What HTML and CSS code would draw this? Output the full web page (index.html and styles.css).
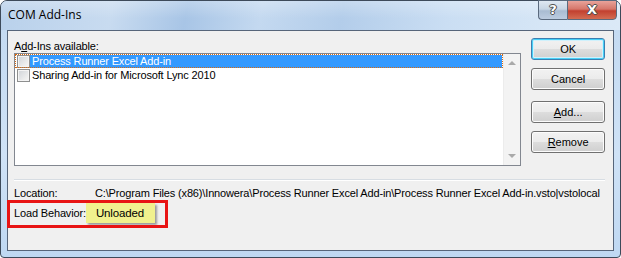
FILE: index.html
```html
<!DOCTYPE html>
<html lang="en">
<head>
  <meta charset="UTF-8">
  <title>COM Add-Ins</title>
  <link rel="stylesheet" href="styles.css">
</head>
<body>
  <div class="window">
    <!-- Title bar -->
    <div class="titlebar">
      <span class="title">COM Add-Ins</span>
      <div class="caption-btns">
        <div class="cap-btn help">?</div>
        <div class="cap-btn close">X</div>
      </div>
    </div>

    <div class="client">
      <div class="main-row">
        <div class="list-col">
          <div class="list-label">A<u>d</u>d-Ins available:</div>
          <div class="listbox">
            <div class="rows">
              <div class="row selected">
                <span class="check"></span>
                <span class="row-text">Process Runner Excel Add-in</span>
              </div>
              <div class="row">
                <span class="check"></span>
                <span class="row-text">Sharing Add-in for Microsoft Lync 2010</span>
              </div>
            </div>
            <div class="scrollbar">
              <span class="arrow up"></span>
              <span class="arrow down"></span>
            </div>
          </div>
        </div>

        <div class="btn-col">
          <button class="btn default">OK</button>
          <button class="btn">Cancel</button>
          <button class="btn gap"><u>A</u>dd...</button>
          <button class="btn"><u>R</u>emove</button>
        </div>
      </div>

      <div class="separator"></div>

      <div class="info-row">
        <span class="info-label">Location:</span>
        <span class="info-value">C:\Program Files (x86)\Innowera\Process Runner Excel Add-in\Process Runner Excel Add-in.vsto|vstolocal</span>
      </div>
      <div class="info-row behavior">
        <span class="info-label">Load Behavior:</span>
        <span class="callout">Unloaded</span>
      </div>
    </div>

    <!-- annotation box -->
    <div class="highlight"></div>
  </div>
</body>
</html>
```

FILE: styles.css
```css
* {
  margin: 0;
  padding: 0;
  box-sizing: border-box;
}

body {
  width: 621px;
  height: 258px;
  overflow: hidden;
  background: #fff;
  font-family: 'Liberation Sans', Arial, sans-serif;
  font-size: 11px;
  letter-spacing: -0.15px;
  color: #000;
}

.window {
  position: relative;
  width: 621px;
  height: 258px;
  border: 1px solid #3d4a5a;
  border-radius: 7px 7px 4px 4px;
  background: linear-gradient(180deg, #c2d9f1 0%, #cfe2f6 60%, #bfd8f2 100%);
  padding: 0 6px 6px 6px;
  display: flex;
  flex-direction: column;
}

/* Title bar */
.titlebar {
  height: 29px;
  display: flex;
  align-items: flex-start;
  margin: 0 -6px;
  padding: 0 3px 0 7px;
  border-radius: 6px 6px 0 0;
  background:
    linear-gradient(180deg, rgba(255,255,255,0.25) 0%, rgba(255,255,255,0) 60%),
    linear-gradient(100deg, #b9d1eb 0%, #c8dbf0 18%, #a8c5e6 30%, #c4d9f0 42%, #b3cdea 55%, #cadef3 72%, #d6e6f6 88%, #dbe9f7 100%);
}

.title {
  font-family: 'Open Sans', 'Liberation Sans', sans-serif;
  font-size: 12px;
  line-height: 12px;
  letter-spacing: 0;
  margin-top: 8px;
  color: #000;
}

.caption-btns {
  margin-left: auto;
  display: flex;
  margin-top: -1px;
}

.cap-btn {
  height: 20px;
  border: 1px solid #5a6a7e;
  color: #fff;
  font-family: 'DejaVu Sans', sans-serif;
  font-weight: bold;
  font-size: 13px;
  line-height: 18px;
  letter-spacing: 0;
  text-align: center;
  text-shadow: 0 0 1px #333, 1px 0 0 #555, -1px 0 0 #555, 0 1px 0 #555, 0 -1px 0 #555;
}

.cap-btn.help {
  width: 29px;
  border-right: none;
  border-radius: 0 0 0 4px;
  background: linear-gradient(180deg, #dfe8f2 0%, #c7d5e4 45%, #a9bcd2 55%, #bccce0 100%);
}

.cap-btn.close {
  width: 50px;
  border-radius: 0 0 4px 0;
  background: linear-gradient(180deg, #e8a39a 0%, #d5766a 45%, #c2402f 55%, #d36c52 100%);
}

/* Client area */
.client {
  flex: 1;
  background: #f0f0f0;
  border: 1px solid #56657a;
  padding: 7px 8px 0 6px;
}

.main-row {
  display: flex;
  gap: 10px;
}

.list-col {
  width: 509px;
}

.list-label {
  height: 15px;
  line-height: 13px;
  padding-top: 2px;
}

.listbox {
  height: 113px;
  background: #fff;
  border: 1px solid #828790;
  display: flex;
}

.rows {
  flex: 1;
}

.row {
  height: 14px;
  display: flex;
  align-items: center;
  padding-left: 2px;
}

.row.selected {
  outline: 1px dotted #d86a10;
  outline-offset: -1px;
}

.row.selected .row-text {
  background: #3399ff;
  color: #fff;
  align-self: stretch;
  flex: 1;
  line-height: 13px;
  margin: 1px 1px 0 0;
}

.row-text {
  padding-left: 2px;
  line-height: 14px;
  white-space: nowrap;
}

.check {
  width: 13px;
  height: 13px;
  flex: none;
  border: 1px solid #8e8f8f;
  background: linear-gradient(135deg, #cfd3d8 0%, #eceded 70%, #f7f7f7 100%);
  box-shadow: inset 0 0 0 1px #f4f4f4;
}

.scrollbar {
  width: 17px;
  background: #f3f3f3;
  border-left: 1px solid #ececec;
  display: flex;
  flex-direction: column;
  justify-content: space-between;
  align-items: center;
  padding: 7px 0;
}

.arrow {
  width: 0;
  height: 0;
  border-left: 4px solid transparent;
  border-right: 4px solid transparent;
}

.arrow.up {
  border-bottom: 4px solid #a9a9a9;
}

.arrow.down {
  border-top: 4px solid #a9a9a9;
}

/* Buttons */
.btn-col {
  width: 74px;
  display: flex;
  flex-direction: column;
  gap: 8px;
}

.btn {
  height: 22px;
  font-family: 'Liberation Sans', Arial, sans-serif;
  font-size: 11px;
  color: #000;
  border: 1px solid #707070;
  border-radius: 3px;
  background: linear-gradient(180deg, #f2f2f2 0%, #ebebeb 50%, #dddddd 51%, #cfcfcf 100%);
  box-shadow: inset 0 0 0 1px #fcfcfc;
}

.btn.default {
  border-color: #3c7fb1;
  box-shadow: inset 0 0 0 1px #48d0f7, inset 0 0 0 2px #d0f1fc;
}

.btn.gap {
  margin-top: 3px;
}

.separator {
  margin-top: 13px;
  height: 2px;
  border-top: 1px solid #d7dde3;
  border-bottom: 1px solid #fff;
}

/* Location / behaviour */
.info-row {
  display: flex;
  align-items: center;
  height: 13px;
  margin-top: 5px;
  white-space: nowrap;
}

.info-label {
  width: 81px;
  flex: none;
}

.info-row.behavior {
  height: 20px;
  margin-top: 4px;
}

.info-row.behavior .info-label {
  width: auto;
}

.callout {
  height: 20px;
  width: 69px;
  line-height: 20px;
  padding-left: 10px;
  font-size: 11.5px;
  background: #f1f18e;
  box-shadow: 2px 2px 2px rgba(0, 0, 0, 0.35);
}

.highlight {
  position: absolute;
  left: 6px;
  top: 199px;
  width: 161px;
  height: 28px;
  border: 3px solid #e81414;
}
```
